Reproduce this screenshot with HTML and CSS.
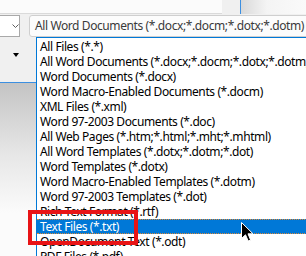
FILE: index.html
```html
<!DOCTYPE html>
<html lang="en">
  <head>
    <title>Save as type</title>
    <meta charset="utf-8" />
    <link rel="stylesheet" href="styles.css">
  </head>

  <body>
    <div class="window">
      <div class="topbar">
        <div class="tab"></div>
        <div class="tab-gap"></div>
        <div class="pane-edge"></div>
      </div>

      <div class="toolbar">
        <div class="combo combo-small">
          <svg width="7" height="5" viewBox="0 0 7 5">
            <path d="M0.5 0.5 L3.5 3.5 L6.5 0.5" fill="none" stroke="#5f5f5f" stroke-width="1" />
          </svg>
        </div>
        <div class="combo combo-type">All Word Documents (*.docx;*.docm;*.dotx;*.dotm)</div>
      </div>

      <div class="sidebar">
        <div class="sidebar-top"><span class="caret"></span></div>
        <div class="sidebar-bottom"></div>
      </div>

      <ul class="type-list">
        <li>All Files (*.*)</li>
        <li>All Word Documents (*.docx;*.docm;*.dotx;*.dotm;*.doc;*.dot)</li>
        <li>Word Documents (*.docx)</li>
        <li>Word Macro-Enabled Documents (*.docm)</li>
        <li>XML Files (*.xml)</li>
        <li>Word 97-2003 Documents (*.doc)</li>
        <li>All Web Pages (*.htm;*.html;*.mht;*.mhtml)</li>
        <li>All Word Templates (*.dotx;*.dotm;*.dot)</li>
        <li>Word Templates (*.dotx)</li>
        <li>Word Macro-Enabled Templates (*.dotm)</li>
        <li>Word 97-2003 Templates (*.dot)</li>
        <li>Rich Text Format (*.rtf)</li>
        <li class="selected">Text Files (*.txt)</li>
        <li>OpenDocument Text (*.odt)</li>
        <li>PDF Files (*.pdf)</li>
      </ul>

      <!-- annotation box drawn over the list -->
      <div class="callout"></div>

      <svg class="pointer" width="13" height="20" viewBox="0 0 13 20">
        <path d="M0.5 0.5 L0.5 16.5 L4.5 12.8 L7.2 19 L9.6 18 L7 11.8 L12 11.8 Z"
              fill="#000" stroke="#fff" stroke-width="1" stroke-linejoin="miter" />
      </svg>
    </div>
  </body>
</html>
```

FILE: styles.css
```css
html,
body {
  margin: 0;
  padding: 0;
}

body {
  font-family: "Noto Sans", "Open Sans", Arial, sans-serif;
  font-size: 12px;
  letter-spacing: -0.4px;
  background: #f0f0f0;
}

.window {
  position: relative;
  width: 306px;
  height: 256px;
  overflow: hidden;
}

/* strip at the very top */
.topbar {
  display: flex;
  height: 14px;
}

.tab {
  width: 222px;
  background: #fbfbfb;
  border-bottom: 1px solid #dadada;
}

.tab-gap {
  width: 18px;
  background: #f0f0f0;
}

.pane-edge {
  flex: 1;
  border-left: 1px solid #3c8fe0;
  background: linear-gradient(to right, #d9d9d9, #f4f4f4 40%, #fafafa);
}

/* the two combo boxes */
.toolbar {
  display: flex;
  align-items: flex-start;
  height: 23px;
  padding-top: 1px;
  box-sizing: border-box;
}

.combo {
  box-sizing: border-box;
  height: 22px;
  background: #fff;
  border: 1px solid #cfcfcf;
}

.combo-small {
  width: 26px;
  margin-left: -2px;
  border-color: #a9a9a9;
  display: flex;
  align-items: center;
  padding-left: 13px;
}

.combo-small svg {
  display: block;
}

.combo-type {
  margin-left: 9px;
  width: 300px;
  flex: none;
  border-radius: 3px 0 0 3px;
  background: #fcfcfc;
  color: #3a3a3a;
  line-height: 20px;
  padding-left: 5px;
  white-space: nowrap;
  overflow: hidden;
}

/* left column under the combo boxes */
.sidebar {
  width: 36px;
  display: flex;
  flex-direction: column;
  height: 219px;
}

.sidebar-top {
  height: 45px;
  background: #f0f0f0;
  border-bottom: 1px solid #3c8fe0;
  position: relative;
}

.caret {
  position: absolute;
  left: 13px;
  top: 16px;
  width: 0;
  height: 0;
  border-left: 3px solid transparent;
  border-right: 3px solid transparent;
  border-top: 4px solid #000;
}

.sidebar-bottom {
  flex: 1;
  background: linear-gradient(#c4c4c4, #e6e6e6 70px, #fbfbfb 130px);
}

/* the open drop-down list */
.type-list {
  position: absolute;
  left: 36px;
  top: 37px;
  width: 300px;
  height: 230px;
  overflow: hidden;
  margin: 0;
  padding: 1px 0 0 0;
  list-style: none;
  background: #fff;
  border-top: 1px solid #0078d7;
  border-left: 1px solid #0078d7;
  color: #000;
}

.type-list li {
  box-sizing: border-box;
  height: 15px;
  line-height: 15px;
  padding-left: 3px;
  white-space: nowrap;
}

.type-list li.selected {
  background: #0078d7;
  color: #fff;
  border-top: 1px dotted #d9893a;
  border-bottom: 1px dotted #d9893a;
  line-height: 13px;
}

.callout {
  position: absolute;
  left: 28px;
  top: 210px;
  width: 110px;
  height: 35px;
  box-sizing: border-box;
  border: 4px solid #e81416;
}

.pointer {
  position: absolute;
  left: 241px;
  top: 222px;
}
```
